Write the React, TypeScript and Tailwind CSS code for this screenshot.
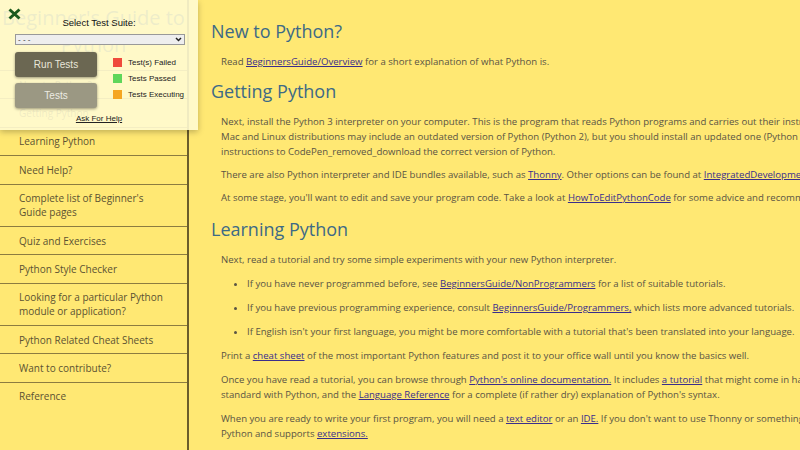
import React from "react";

const L = ({ children }: { children: React.ReactNode }) => (
  <a href="#" className="text-[#3a2e8c] underline">{children}</a>
);

const sideItems: React.ReactNode[] = [
  "New to Python?",
  "Getting Python",
  "Learning Python",
  "Need Help?",
  <>Complete list of Beginner's<br />Guide pages</>,
  "Quiz and Exercises",
  "Python Style Checker",
  <>Looking for a particular Python<br />module or application?</>,
  "Python Related Cheat Sheets",
  "Want to contribute?",
  "Reference",
];

export default function App() {
  return (
    <div className="relative w-[800px] h-[450px] overflow-hidden bg-[#ffe873]" style={{ fontFamily: '"Open Sans", sans-serif' }}>
      <div className="flex h-full">
        <aside className="w-[189px] shrink-0 border-r-2 border-[#6b5d2c] h-full text-[#5c5232] text-[10px] leading-[14px]">
          <div className="h-[71px] border-b border-[#8c7c40] text-center text-[20px] leading-[27px] pt-[4px] text-[#4a6a7a]">
            Beginner's Guide to<br />Python
          </div>
          {sideItems.map((it, i) => (
            <div key={i} className="border-b border-[#8c7c40] pl-[19px] py-[6.7px] last:border-b-0">
              {it}
            </div>
          ))}
        </aside>
        <main className="pl-[22px] pt-[16px] text-[#5a5444] text-[9.6px] leading-[15px] whitespace-nowrap">
          <h1 className="text-[18px] leading-[30px] text-[#3d6a86]">New to Python?</h1>
          <p className="mt-[8px] pl-[10px]">Read <L>BeginnersGuide/Overview</L> for a short explanation of what Python is.</p>
          <h1 className="mt-[7px] text-[18px] leading-[30px] text-[#3d6a86]">Getting Python</h1>
          <p className="mt-[8px] pl-[10px]">
            Next, install the Python 3 interpreter on your computer. This is the program that reads Python programs and carries out their instructions; you need it before you can do any Python programming.<br />
            Mac and Linux distributions may include an outdated version of Python (Python 2), but you should install an updated one (Python 3). See BeginnersGuide/Download for<br />
            instructions to CodePen_removed_download the correct version of Python.
          </p>
          <p className="mt-[8px] pl-[10px]">There are also Python interpreter and IDE bundles available, such as <L>Thonny</L>. Other options can be found at <L>IntegratedDevelopmentEnvironments</L>.</p>
          <p className="mt-[8px] pl-[10px]">At some stage, you'll want to edit and save your program code. Take a look at <L>HowToEditPythonCode</L> for some advice and recommendations.</p>
          <h1 className="mt-[9px] text-[18px] leading-[30px] text-[#3d6a86]">Learning Python</h1>
          <p className="mt-[8px] pl-[10px]">Next, read a tutorial and try some simple experiments with your new Python interpreter.</p>
          <ul className="pl-[36px] list-disc">
            <li className="mt-[9px]">If you have never programmed before, see <L>BeginnersGuide/NonProgrammers</L> for a list of suitable tutorials.</li>
            <li className="mt-[9px]">If you have previous programming experience, consult <L>BeginnersGuide/Programmers,</L> which lists more advanced tutorials.</li>
            <li className="mt-[9px]">If English isn't your first language, you might be more comfortable with a tutorial that's been translated into your language.</li>
          </ul>
          <p className="mt-[9px] pl-[10px]">Print a <L>cheat sheet</L> of the most important Python features and post it to your office wall until you know the basics well.</p>
          <p className="mt-[9px] pl-[10px]">
            Once you have read a tutorial, you can browse through <L>Python's online documentation.</L> It includes <L>a tutorial</L> that might come in handy, a Library Reference that lists all of the modules that come<br />
            standard with Python, and the <L>Language Reference</L> for a complete (if rather dry) explanation of Python's syntax.
          </p>
          <p className="mt-[9px] pl-[10px]">
            When you are ready to write your first program, you will need a <L>text editor</L> or an <L>IDE.</L> If you don't want to use Thonny or something else, then IDLE is a simple IDE that comes with<br />
            Python and supports <L>extensions.</L>
          </p>
        </main>
      </div>

      <div className="absolute left-0 top-0 w-[198px] h-[130px] bg-[#fffbd2]/90 shadow-[0_2px_6px_rgba(0,0,0,0.25)]" style={{ fontFamily: '"Liberation Sans", Arial, sans-serif' }}>
        <svg className="absolute left-[8px] top-[8px]" width="13" height="12" viewBox="0 0 13 12">
          <path d="M1.5 1.5 L11.5 10.5 M11.5 1.5 L1.5 10.5" stroke="#1b5a1e" strokeWidth="3" strokeLinecap="butt" />
        </svg>
        <div className="absolute left-0 right-0 top-[16px] text-center text-[9.5px] text-[#111]">Select Test Suite:</div>
        <div className="absolute left-[15px] top-[34px] w-[170px] h-[11px] border border-[#999] bg-[#eeeeee] flex items-center justify-between px-[2px] text-[8px] leading-none text-[#333]">
          <span>- - -</span>
          <svg width="7" height="5" viewBox="0 0 7 5"><path d="M1 1 L3.5 3.5 L6 1" stroke="#222" strokeWidth="1.5" fill="none" /></svg>
        </div>
        <div className="absolute left-[15px] top-[52px] w-[82px] h-[25px] rounded-[3px] bg-[#6b6752] shadow-[0_1px_3px_rgba(0,0,0,0.4)] flex items-center justify-center text-[10px] text-[#e9e6d8]">Run Tests</div>
        <div className="absolute left-[15px] top-[83px] w-[82px] h-[25px] rounded-[3px] bg-[#9b9883] shadow-[0_1px_3px_rgba(0,0,0,0.4)] flex items-center justify-center text-[10px] text-[#ecebe2]">Tests</div>
        <div className="absolute left-[113px] top-[58px] flex flex-col gap-[7px] text-[8px] leading-[9px] text-[#222]">
          <div className="flex items-center gap-[6px]"><span className="w-[9px] h-[9px] bg-[#ef4a3c]" />Test(s) Failed</div>
          <div className="flex items-center gap-[6px]"><span className="w-[9px] h-[9px] bg-[#5fd65a]" />Tests Passed</div>
          <div className="flex items-center gap-[6px]"><span className="w-[9px] h-[9px] bg-[#f5a623]" />Tests Executing</div>
        </div>
        <div className="absolute left-0 right-0 top-[113px] text-center text-[8px] text-[#222] underline">Ask For Help</div>
      </div>
    </div>
  );
}
